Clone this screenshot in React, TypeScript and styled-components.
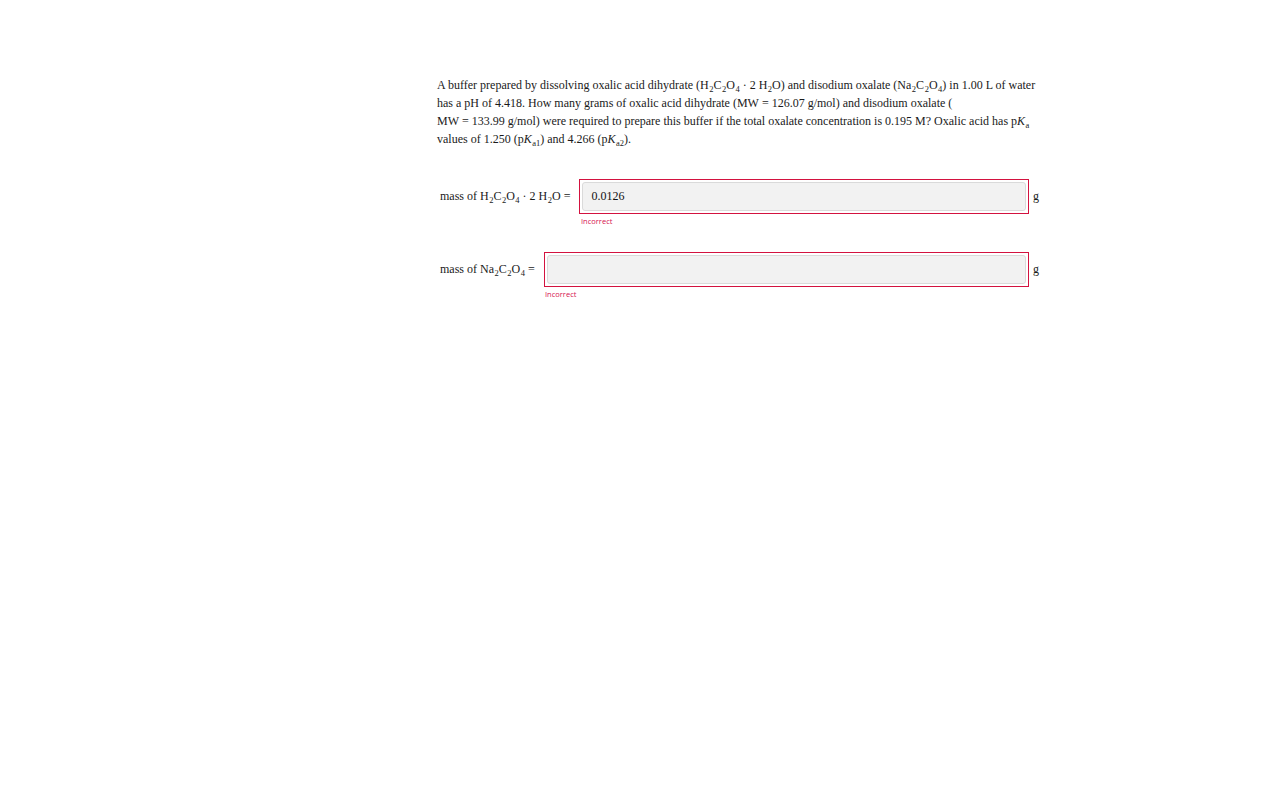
import { createGlobalStyle } from "styled-components";
import styled from "styled-components";

const GlobalStyle = createGlobalStyle`
  html, body {
    margin: 0;
    padding: 0;
    background: #ffffff;
  }
`;

const Page = styled.div`
  width: 1280px;
  height: 800px;
  padding: 76px 0 0 437px;
  box-sizing: border-box;
  font-family: "Liberation Serif", "Times New Roman", serif;
  color: #1a1a1a;
`;

const Question = styled.div`
  width: 603px;
`;

const Prompt = styled.p`
  margin: 0;
  font-size: 12px;
  line-height: 18px;
  white-space: nowrap;
`;

const Sub = styled.sub`
  font-size: 8.5px;
  vertical-align: -3px;
  line-height: 0;
  margin-left: 0.5px;
`;

const Var = styled.i`
  font-style: italic;
`;

const Op = styled.span`
  margin: 0 3px;
`;

const Answers = styled.div`
  display: flex;
  flex-direction: column;
  gap: 26px;
  margin-top: 31px;
  padding-left: 3px;
`;

const AnswerRow = styled.div`
  display: flex;
  flex-direction: column;
`;

const FieldLine = styled.div`
  display: flex;
  align-items: center;
  font-size: 12px;
`;

const Label = styled.span`
  white-space: nowrap;
  margin-right: 6px;
`;

const Frame = styled.div`
  flex: 1;
  height: 35px;
  box-sizing: border-box;
  border: 1px solid #d3123f;
  padding: 2px;
  display: flex;
`;

const Field = styled.div`
  flex: 1;
  box-sizing: border-box;
  border: 1px solid #dadada;
  border-radius: 3px;
  background: #f2f2f2;
  display: flex;
  align-items: center;
  padding: 0 8px;
  font-size: 12px;
  color: #111;
`;

const Unit = styled.span`
  margin-left: 4px;
  width: 7px;
`;

const Feedback = styled.div<{ $offset: number }>`
  margin-left: ${({ $offset }) => $offset}px;
  margin-top: 2px;
  font-family: "Open Sans", "Noto Sans", sans-serif;
  font-size: 7.5px;
  line-height: 10px;
  color: #d6114f;
`;

export default function App() {
  return (
    <>
      <GlobalStyle />
      <Page>
        <Question>
          <Prompt>
            A buffer prepared by dissolving oxalic acid dihydrate (H<Sub>2</Sub>C<Sub>2</Sub>O<Sub>4</Sub>
            <Op>·</Op>2 H<Sub>2</Sub>O) and disodium oxalate (Na<Sub>2</Sub>C<Sub>2</Sub>O<Sub>4</Sub>) in 1.00 L of water
            <br />
            has a pH of 4.418. How many grams of oxalic acid dihydrate (MW<Op>=</Op>126.07 g/mol) and disodium oxalate (
            <br />
            MW<Op>=</Op>133.99 g/mol) were required to prepare this buffer if the total oxalate concentration is 0.195 M? Oxalic acid has p
            <Var>K</Var>
            <Sub>a</Sub>
            <br />
            values of 1.250 (p<Var>K</Var><Sub>a1</Sub>) and 4.266 (p<Var>K</Var><Sub>a2</Sub>).
          </Prompt>
          <Answers>
            <AnswerRow>
              <FieldLine>
                <Label>
                  mass of H<Sub>2</Sub>C<Sub>2</Sub>O<Sub>4</Sub>
                  <Op>·</Op>2 H<Sub>2</Sub>O<Op>=</Op>
                </Label>
                <Frame>
                  <Field>0.0126</Field>
                </Frame>
                <Unit>g</Unit>
              </FieldLine>
              <Feedback $offset={141}>Incorrect</Feedback>
            </AnswerRow>
            <AnswerRow>
              <FieldLine>
                <Label>
                  mass of Na<Sub>2</Sub>C<Sub>2</Sub>O<Sub>4</Sub>
                  <Op>=</Op>
                </Label>
                <Frame>
                  <Field />
                </Frame>
                <Unit>g</Unit>
              </FieldLine>
              <Feedback $offset={105}>Incorrect</Feedback>
            </AnswerRow>
          </Answers>
        </Question>
      </Page>
    </>
  );
}
